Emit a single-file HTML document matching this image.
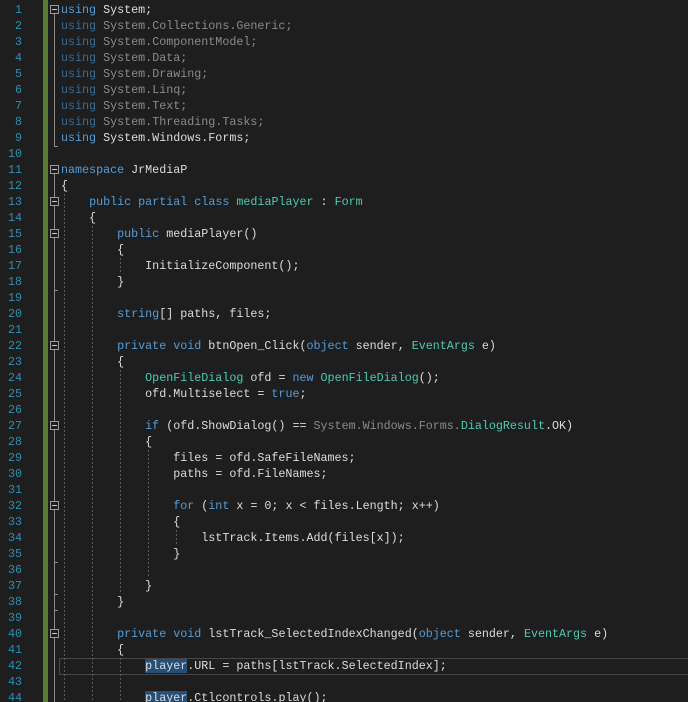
<!DOCTYPE html>
<html><head><meta charset="utf-8"><style>
html,body{margin:0;padding:0;background:#1e1e1e;width:688px;height:702px;overflow:hidden;position:relative}
.ln{position:absolute;left:0;width:22px;text-align:right;color:#2b91af;font:11.7px/16px "Liberation Mono",monospace}
.c{position:absolute;left:61px;white-space:pre;color:#dcdcdc;font:11.7px/16px "Liberation Mono",monospace}
.k{color:#569cd6}.t{color:#4ec9b0}.dk{color:#3c6a92}.dt{color:#8a8a8a}
.g{position:absolute;width:1px;background:repeating-linear-gradient(to bottom,#5a5a5a 0 2px,transparent 2px 4px)}
.box{position:absolute;left:50px;width:7px;height:7px;border:1px solid #9a9a9a;background:#1e1e1e}
.box:after{content:"";position:absolute;left:1px;top:3px;width:5px;height:1px;background:#c8c8c8}
.vl{position:absolute;left:54px;width:1px;background:#8a8a8a}
.tk{position:absolute;left:54px;width:4px;height:1px;background:#8a8a8a}
.sel{background:#264f78}
</style></head><body>
<div style="position:absolute;left:43px;top:0;width:5px;height:702px;background:#5c7c36"></div>
<div style="position:absolute;left:59px;top:658px;width:640px;height:15px;border:1px solid #464646"></div>
<div class="vl" style="top:11px;height:136px"></div><div class="tk" style="top:146px"></div>
<div class="vl" style="top:171px;height:531px"></div>
<div class="tk" style="top:290px"></div><div class="tk" style="top:594px"></div><div class="tk" style="top:610px"></div><div class="tk" style="top:562px"></div>
<div class="g" style="left:64px;top:194px;height:508px"></div>
<div class="g" style="left:92px;top:226px;height:476px"></div>
<div class="g" style="left:120px;top:258px;height:16px"></div>
<div class="g" style="left:120px;top:370px;height:224px"></div>
<div class="g" style="left:120px;top:658px;height:44px"></div>
<div class="g" style="left:148px;top:450px;height:128px"></div>
<div class="g" style="left:176px;top:530px;height:16px"></div>
<div class="box" style="top:5px"></div><div class="box" style="top:165px"></div><div class="box" style="top:197px"></div><div class="box" style="top:229px"></div><div class="box" style="top:341px"></div><div class="box" style="top:421px"></div><div class="box" style="top:501px"></div><div class="box" style="top:629px"></div>
<div id="L"></div>
<script>
var code=[
'<span class="k">using</span> System;',
'<span class="dk">using</span> <span class="dt">System.Collections.Generic;</span>',
'<span class="dk">using</span> <span class="dt">System.ComponentModel;</span>',
'<span class="dk">using</span> <span class="dt">System.Data;</span>',
'<span class="dk">using</span> <span class="dt">System.Drawing;</span>',
'<span class="dk">using</span> <span class="dt">System.Linq;</span>',
'<span class="dk">using</span> <span class="dt">System.Text;</span>',
'<span class="dk">using</span> <span class="dt">System.Threading.Tasks;</span>',
'<span class="k">using</span> System.Windows.Forms;',
'',
'<span class="k">namespace</span> JrMediaP',
'{',
'    <span class="k">public</span> <span class="k">partial</span> <span class="k">class</span> <span class="t">mediaPlayer</span> : <span class="t">Form</span>',
'    {',
'        <span class="k">public</span> mediaPlayer()',
'        {',
'            InitializeComponent();',
'        }',
'',
'        <span class="k">string</span>[] paths, files;',
'',
'        <span class="k">private</span> <span class="k">void</span> btnOpen_Click(<span class="k">object</span> sender, <span class="t">EventArgs</span> e)',
'        {',
'            <span class="t">OpenFileDialog</span> ofd = <span class="k">new</span> <span class="t">OpenFileDialog</span>();',
'            ofd.Multiselect = <span class="k">true</span>;',
'',
'            <span class="k">if</span> (ofd.ShowDialog() == <span class="dt">System.Windows.Forms.</span><span class="t">DialogResult</span>.OK)',
'            {',
'                files = ofd.SafeFileNames;',
'                paths = ofd.FileNames;',
'',
'                <span class="k">for</span> (<span class="k">int</span> x = 0; x &lt; files.Length; x++)',
'                {',
'                    lstTrack.Items.Add(files[x]);',
'                }',
'',
'            }',
'        }',
'',
'        <span class="k">private</span> <span class="k">void</span> lstTrack_SelectedIndexChanged(<span class="k">object</span> sender, <span class="t">EventArgs</span> e)',
'        {',
'            <span class="sel">player</span>.URL = paths[lstTrack.SelectedIndex];',
'',
'            <span class="sel">player</span>.Ctlcontrols.play();'];
var h='';
for(var i=0;i<code.length;i++){var y=2+16*i;
h+='<div class="ln" style="top:'+y+'px">'+(i+1)+'</div><div class="c" style="top:'+y+'px">'+code[i]+'</div>';}
document.getElementById('L').innerHTML=h;
</script>
</body></html>
